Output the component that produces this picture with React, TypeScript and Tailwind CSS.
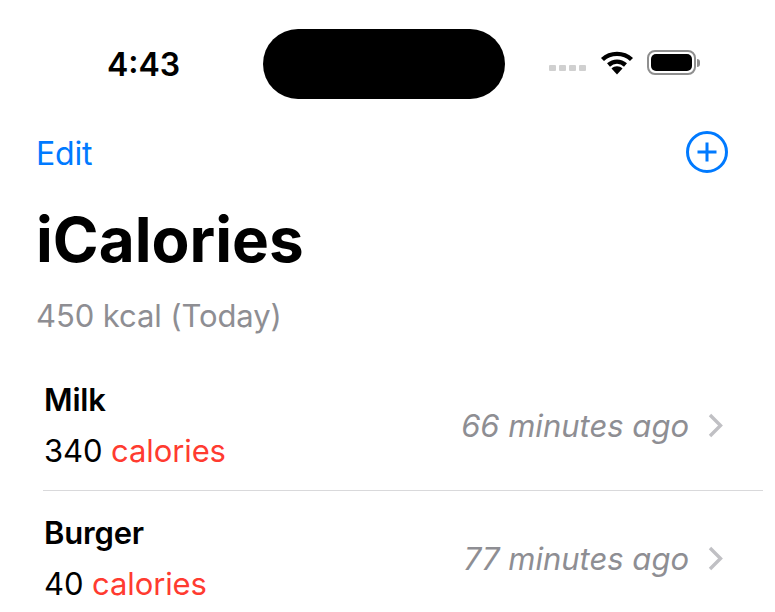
import React from 'react';

const font = { fontFamily: 'Inter, "Liberation Sans", sans-serif' };

function Wifi() {
  return (
    <svg width="34" height="26" viewBox="0 0 34 26" fill="none">
      <path d="M2.5 9.5C10.5 2 23.5 2 31.5 9.5" stroke="#000" strokeWidth="4.4" />
      <path d="M8.5 15C13.5 10.5 20.5 10.5 25.5 15" stroke="#000" strokeWidth="4.4" />
      <path d="M11.5 18.5C14.5 15.6 19.5 15.6 22.5 18.5L17 24.5Z" fill="#000" />
    </svg>
  );
}

function Battery() {
  return (
    <div className="flex items-center gap-[1px]">
      <div className="w-[49px] h-[25px] rounded-[8px] border-2 border-[#8f8f8f] p-[2px]">
        <div className="w-full h-full rounded-[5px] bg-black" />
      </div>
      <div className="w-[3px] h-[8px] rounded-r-full bg-[#8f8f8f]" />
    </div>
  );
}

function Row({ name, cals, ago, border }: { name: string; cals: number; ago: string; border?: boolean }) {
  return (
    <div className={`ml-[43px] mr-[12px] h-[133px] flex items-center justify-between pl-[1px] pr-[40px] ${border ? 'border-b border-[#d9d9db]' : ''}`}>
      <div className="pt-[2px]">
        <div className="text-[31px] leading-[40px] font-semibold text-black tracking-[-0.2px]">{name}</div>
        <div className="mt-[11px] text-[31px] leading-[40px] text-black tracking-[-0.1px]">
          {cals} <span className="text-[#ff3b30]">calories</span>
        </div>
      </div>
      <div className="flex items-center gap-[20px] pt-[2px]">
        <span className="text-[31px] italic text-[#8e8e93] mr-[-1px] translate-y-[1px]">{ago}</span>
        <svg width="15" height="25" viewBox="0 0 15 25" fill="none">
          <path d="M2 2L12.5 12.5L2 23" stroke="#c0c0c4" strokeWidth="3.4" />
        </svg>
      </div>
    </div>
  );
}

export default function App() {
  return (
    <div className="w-[775px] h-[612px] overflow-hidden bg-white" style={font}>
      {/* Status bar */}
      <div className="h-[70px] mt-[29px] flex items-center">
        <div className="w-[263px] pl-[107px] pt-[1px] text-[32px] font-semibold text-black">4:43</div>
        <div className="w-[242px] h-[70px] rounded-full bg-black" />
        <div className="flex items-center ml-[44px]">
          <div className="flex gap-[3px] mt-[8px]">
            <div className="w-[7px] h-[6px] rounded-[1px] bg-[#d0d0d0]" />
            <div className="w-[7px] h-[6px] rounded-[1px] bg-[#d0d0d0]" />
            <div className="w-[7px] h-[6px] rounded-[1px] bg-[#d0d0d0]" />
            <div className="w-[7px] h-[6px] rounded-[1px] bg-[#d0d0d0]" />
          </div>
          <div className="ml-[14px] mt-[-3px]"><Wifi /></div>
          <div className="ml-[13px] mt-[-3px]"><Battery /></div>
        </div>
      </div>

      {/* Nav */}
      <div className="mt-[31px] pl-[36px] pr-[47px] flex items-center justify-between h-[44px]">
        <span className="text-[32px] tracking-[-0.2px] text-[#007aff] pt-[4px]">Edit</span>
        <svg width="42" height="42" viewBox="0 0 42 42" fill="none">
          <circle cx="21" cy="21" r="19.5" stroke="#007aff" strokeWidth="3" />
          <path d="M21 11.5V30.5M11.5 21H30.5" stroke="#007aff" strokeWidth="3" />
        </svg>
      </div>

      <h1 className="mt-[31px] ml-[36px] text-[62px] leading-[70px] font-bold text-black">iCalories</h1>
      <div className="mt-[21px] ml-[36px] text-[31px] leading-[40px] tracking-[-0.1px] text-[#8e8e93]">450 kcal (Today)</div>

      <div className="mt-[22px]">
        <Row name="Milk" cals={340} ago="66 minutes ago" border />
        <Row name="Burger" cals={40} ago="77 minutes ago" />
      </div>
    </div>
  );
}
